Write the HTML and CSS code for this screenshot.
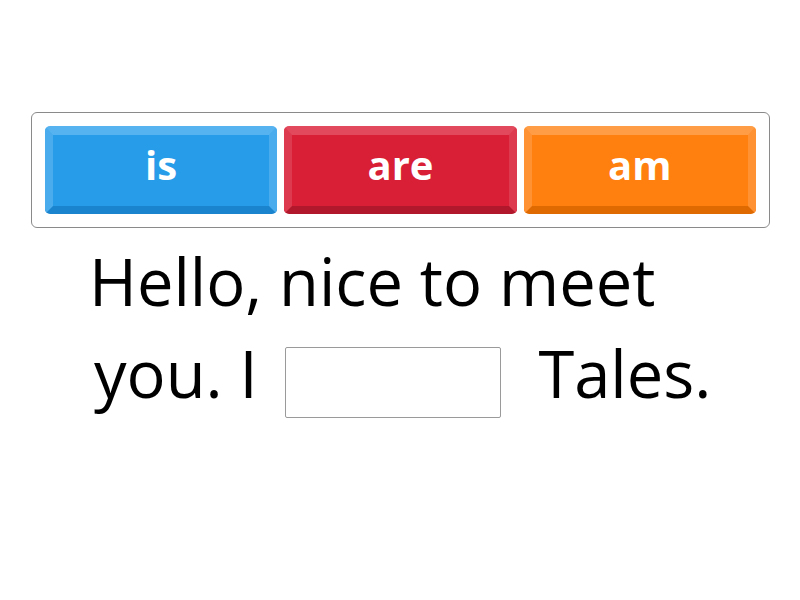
FILE: index.html
```html
<!DOCTYPE html>
<html>
<head>
<meta charset="utf-8">
<link rel="stylesheet" href="styles.css">
</head>
<body>
<div class="page">
  <div class="bank">
    <div class="tile blue"><span class="face">is</span></div>
    <div class="tile red"><span class="face">are</span></div>
    <div class="tile orange"><span class="face">am</span></div>
  </div>
  <div class="sentence">
    <div class="line line1">Hello, nice to meet</div>
    <div class="line line2">you. I <span class="blank"></span> Tales.</div>
  </div>
</div>
</body>
</html>
```
FILE: styles.css
```css
html, body {
  margin: 0;
  padding: 0;
  background: #ffffff;
}
body {
  font-family: "Open Sans", "Liberation Sans", sans-serif;
  width: 800px;
  height: 600px;
  overflow: hidden;
}
.page {
  padding-top: 112px;
  padding-left: 31px;
}
.bank {
  box-sizing: border-box;
  width: 739px;
  height: 116px;
  border: 1px solid #8a8a8a;
  border-radius: 6px;
  padding: 13px;
  display: flex;
  gap: 7px;
}
.tile {
  flex: 1;
  box-sizing: border-box;
  border-radius: 5px;
  border-style: solid;
  border-width: 9px 8px 8px 8px;
  display: flex;
}
.face {
  flex: 1;
  display: flex;
  align-items: center;
  justify-content: center;
  color: #ffffff;
  font-weight: 700;
  font-size: 40px;
  padding-bottom: 13px;
}
.blue {
  background: #279ce9;
  border-color: #56b3f0 #4aaced #1b84cf #4aaced;
}
.red {
  background: #d81f35;
  border-color: #e2495c #de3a4f #b1182b #de3a4f;
}
.orange {
  background: #ff7f0f;
  border-color: #ff9d47 #ff9233 #e06a02 #ff9233;
}
.sentence {
  margin-top: 7px;
  font-size: 65px;
  line-height: 92px;
  color: #000;
}
.line1 {
  padding-left: 58px;
}
.line2 {
  padding-left: 63px;
}
.blank {
  display: inline-block;
  box-sizing: border-box;
  width: 216px;
  height: 71px;
  border: 1px solid #9a9a9a;
  border-radius: 2px;
  vertical-align: -20px;
  margin: 0 21px 0 10px;
}
```
